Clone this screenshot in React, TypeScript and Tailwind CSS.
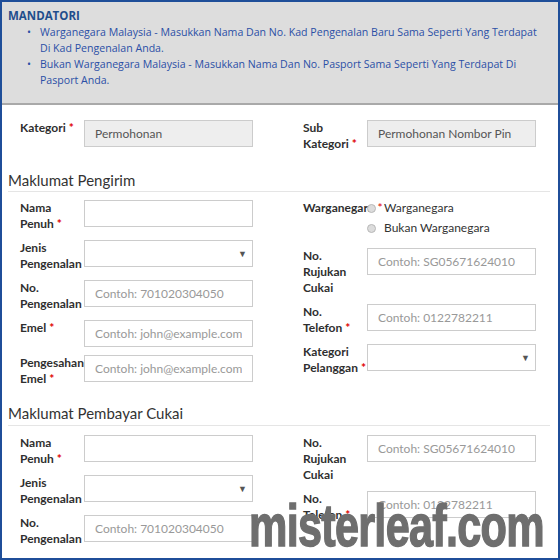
import React from 'react';

const Req = () => <span className="text-[#e00000] ml-[3px]">*</span>;

type FieldProps = {
  label: React.ReactNode;
  placeholder?: string;
  value?: string;
  select?: boolean;
  readOnly?: boolean;
};

const Field: React.FC<FieldProps> = ({ label, placeholder, value, select, readOnly }) => (
  <div className="flex items-start mb-[8px]">
    <div className="w-[64px] shrink-0 font-bold text-[12px] leading-[16px] text-[#2f2f2f]">{label}</div>
    <div
      className={`w-[169px] h-[27px] shrink-0 border border-[#cccccc] flex items-center pl-[10px] text-[12px] ${
        select ? 'pr-[5px]' : 'pr-[10px]'
      } ${readOnly ? 'bg-[#eeeeee] text-[#555]' : 'bg-white text-[#999]'}`}
    >
      <span className="flex-1 overflow-hidden whitespace-nowrap">{value ?? placeholder}</span>
      {select && <span className="text-[9px] text-[#555]">▼</span>}
    </div>
  </div>
);

const Heading: React.FC<{ title: string; className?: string }> = ({ title, className }) => (
  <div className={`border-b border-[#e5e5e5] text-[15px] leading-[20px] text-[#333] ${className ?? ''}`}>{title}</div>
);

const Citizen = () => (
  <div className="flex items-start mb-[8px]">
    <div className="w-[64px] shrink-0 font-bold text-[12px] leading-[16px] text-[#2f2f2f] whitespace-nowrap">Warganegara</div>
    <div className="relative z-10 text-[12px] text-[#333]">
      <div className="flex items-center h-[16px] mb-[4px]">
        <span className="w-[9px] h-[9px] rounded-full bg-[#dcdcdc] border border-[#b8b8b8]" />
        <span className="text-[#e00000] w-[8px] text-center">*</span>
        <span>Warganegara</span>
      </div>
      <div className="flex items-center h-[16px] mb-[4px]">
        <span className="w-[9px] h-[9px] rounded-full bg-[#dcdcdc] border border-[#b8b8b8]" />
        <span className="ml-[8px]">Bukan Warganegara</span>
      </div>
    </div>
  </div>
);

export default function App() {
  return (
    <div
      className="relative w-[560px] h-[560px] overflow-hidden border-2 border-[#1f4e99] bg-white"
      style={{ fontFamily: 'Lato, "Open Sans", sans-serif' }}
    >
      <div
        className="bg-[#dddddd] border-b-2 border-[#a9a9a9] pt-[6px] pb-[15px] pl-[6px] text-[10.6px] leading-[16px] text-[#2b4fa6] whitespace-nowrap"
        style={{ fontFamily: '"Open Sans", sans-serif' }}
      >
        <div className="font-bold text-[11.5px] text-[#1f4e8c]">MANDATORI</div>
        <ul className="pl-[19px]">
          <li className="flex">
            <span className="w-[13px] shrink-0">•</span>
            <span>
              Warganegara Malaysia - Masukkan Nama Dan No. Kad Pengenalan Baru Sama Seperti Yang Terdapat
              <br />
              Di Kad Pengenalan Anda.
            </span>
          </li>
          <li className="flex">
            <span className="w-[13px] shrink-0">•</span>
            <span>
              Bukan Warganegara Malaysia - Masukkan Nama Dan No. Pasport Sama Seperti Yang Terdapat Di
              <br />
              Pasport Anda.
            </span>
          </li>
        </ul>
      </div>

      <div className="pl-[6px] pr-[8px] pt-[15px]">
        <div className="grid grid-cols-[233px_233px] gap-x-[50px] pl-[12px]">
          <Field label={<>Kategori<Req /></>} value="Permohonan" readOnly />
          <Field label={<>Sub Kategori<Req /></>} value="Permohonan Nombor Pin" readOnly />
        </div>

        <Heading title="Maklumat Pengirim" className="mt-[10px] pb-[1px] mb-[8px]" />
        <div className="grid grid-cols-[233px_233px] gap-x-[50px] pl-[12px]">
          <div>
            <Field label={<>Nama Penuh<Req /></>} />
            <Field label="Jenis Pengenalan" select />
            <Field label="No. Pengenalan" placeholder="Contoh: 701020304050" />
            <Field label={<>Emel<Req /></>} placeholder="Contoh: john@example.com" />
            <Field label={<>Pengesahan Emel<Req /></>} placeholder="Contoh: john@example.com" />
          </div>
          <div>
            <Citizen />
            <Field label="No. Rujukan Cukai" placeholder="Contoh: SG05671624010" />
            <Field label={<>No. Telefon<Req /></>} placeholder="Contoh: 0122782211" />
            <Field label={<>Kategori Pelanggan<Req /></>} select />
          </div>
        </div>

        <Heading title="Maklumat Pembayar Cukai" className="mt-[8px] pb-[2px] mb-[9px]" />
        <div className="grid grid-cols-[233px_233px] gap-x-[50px] pl-[12px]">
          <div>
            <Field label={<>Nama Penuh<Req /></>} />
            <Field label="Jenis Pengenalan" select />
            <Field label="No. Pengenalan" placeholder="Contoh: 701020304050" />
          </div>
          <div>
            <Field label="No. Rujukan Cukai" placeholder="Contoh: SG05671624010" />
            <Field label={<>No. Telefon<Req /></>} placeholder="Contoh: 0122782211" />
          </div>
        </div>
      </div>

      {/* watermark */}
      <div
        className="absolute left-[247px] bottom-[2px] text-[60px] leading-[60px] font-bold text-[#6e6e6e] origin-left scale-x-[0.72] whitespace-nowrap tracking-[-1px] [-webkit-text-stroke:1.5px_#6e6e6e]"
        style={{ fontFamily: '"Liberation Sans", Arial, sans-serif' }}
      >
        misterleaf.com
      </div>
    </div>
  );
}
